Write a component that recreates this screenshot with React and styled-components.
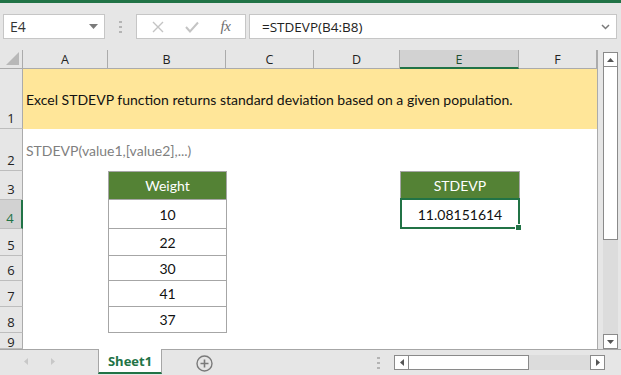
import React from "react";
import styled, { createGlobalStyle } from "styled-components";

const Global = createGlobalStyle`
  html, body { margin: 0; padding: 0; background: #fff; overflow: hidden; }
  #root { width: 621px; height: 375px; }
`;

const UI = `"Open Sans", "Noto Sans", sans-serif`;
const CELLFONT = `"Lato", "Liberation Sans", sans-serif`;

const Frame = styled.div`
  width: 621px;
  height: 375px;
  display: flex;
  flex-direction: column;
  background: #e6e6e6;
  overflow: hidden;
`;

const TopStrip = styled.div`
  height: 3px;
  background: #217346;
  flex: none;
`;

const FormulaBar = styled.div`
  height: 47px;
  flex: none;
  display: flex;
  align-items: flex-start;
  padding: 11px 4px 0 3px;
  box-sizing: border-box;
  background: #e6e6e6;
`;

const Box = styled.div`
  height: 25px;
  box-sizing: border-box;
  background: #fff;
  border: 1px solid #c6c6c6;
  display: flex;
  align-items: center;
`;

const NameBox = styled(Box)`
  width: 102px;
  padding: 0 6px 0 6px;
  justify-content: space-between;
  font-family: ${UI};
  font-size: 14px;
  color: #333;
`;

const Dots = styled.div`
  width: 31px;
  height: 25px;
  display: flex;
  align-items: center;
  justify-content: center;
  flex: none;
`;

const FxBox = styled(Box)`
  width: 110px;
  justify-content: space-around;
  padding: 0 4px 0 4px;
  margin-right: 3px;
`;

const FxText = styled.span`
  font-family: "Liberation Serif", "DejaVu Serif", serif;
  font-style: italic;
  font-size: 15px;
  color: #6d6d6d;
  letter-spacing: -0.5px;
`;

const FormulaInput = styled(Box)`
  flex: 1;
  padding: 0 6px 0 12px;
  justify-content: space-between;
  font-family: ${UI};
  font-size: 13.5px;
  color: #222;
`;

const Main = styled.div`
  display: flex;
  height: 299px;
  flex: none;
`;

const Sheet = styled.div`
  display: grid;
  grid-template-columns: 23px 85px 118px 88px 86px 119px 78px;
  grid-template-rows: 19px 60px 42px 29px 29px 27px 25px 26px 26px 16px;
  width: 597px;
  background: #fff;
  overflow: hidden;
`;

const Corner = styled.div`
  background: #e6e6e6;
  border-right: 1px solid #ababab;
  border-bottom: 1px solid #ababab;
  box-sizing: border-box;
  display: flex;
  align-items: flex-end;
  justify-content: flex-end;
  padding: 0 3px 3px 0;
`;

const ColHeader = styled.div`
  background: ${(p) => (p.$selected ? "#d2d2d2" : "#e6e6e6")};
  border-right: 1px solid #ababab;
  border-bottom: ${(p) => (p.$selected ? "2px solid #217346" : "1px solid #ababab")};
  box-sizing: border-box;
  display: flex;
  align-items: center;
  justify-content: center;
  font-family: ${UI};
  font-size: 12.5px;
  color: ${(p) => (p.$selected ? "#1e4e30" : "#222")};
  padding-top: ${(p) => (p.$selected ? "1px" : "0")};
`;

const RowHeader = styled.div`
  background: ${(p) => (p.$selected ? "#d2d2d2" : "#e6e6e6")};
  border-right: ${(p) => (p.$selected ? "2px solid #217346" : "1px solid #ababab")};
  border-bottom: 1px solid #bdbdbd;
  box-sizing: border-box;
  overflow: hidden;
  display: flex;
  align-items: ${(p) => (p.$clipped ? "flex-start" : "flex-end")};
  justify-content: center;
  padding-bottom: ${(p) => (p.$clipped ? "0" : "2px")};
  padding-top: ${(p) => (p.$clipped ? "2px" : "0")};
  padding-right: ${(p) => (p.$selected ? "1px" : "0")};
  font-family: ${UI};
  font-size: 13px;
  line-height: 15px;
  color: ${(p) => (p.$selected ? "#217346" : "#222")};
`;

const Banner = styled.div`
  grid-column: 2 / span 6;
  background: #ffe699;
  display: flex;
  align-items: center;
  padding: 0 3px;
  font-family: ${CELLFONT};
  font-size: 14px;
  color: #111;
  white-space: nowrap;
`;

const SyntaxCell = styled.div`
  grid-column: 2 / span 6;
  display: flex;
  align-items: center;
  padding: 0 3px;
  font-family: ${CELLFONT};
  font-size: 14px;
  color: #7f7f7f;
  white-space: nowrap;
`;

const Blank = styled.div`
  grid-column: ${(p) => p.$col} / span ${(p) => p.$span || 1};
`;

const TableCell = styled.div`
  position: relative;
  grid-column: ${(p) => p.$col};
  box-sizing: border-box;
  border: 1px solid #a6a6a6;
  border-top: ${(p) => (p.$first ? "1px solid #a6a6a6" : "none")};
  width: calc(100% + 1px);
  background: ${(p) => (p.$head ? "#548235" : "#fff")};
  color: ${(p) => (p.$head ? "#fff" : "#111")};
  display: flex;
  align-items: center;
  justify-content: center;
  font-family: ${CELLFONT};
  font-size: 14px;
`;

const Selection = styled.div`
  position: absolute;
  left: -1px;
  top: -2px;
  right: -1px;
  bottom: -1px;
  border: 2px solid #217346;
  pointer-events: none;
`;

const FillHandle = styled.div`
  position: absolute;
  right: -4px;
  bottom: -4px;
  width: 5px;
  height: 5px;
  background: #217346;
  border: 1px solid #fff;
`;

const VScroll = styled.div`
  width: 24px;
  background: #e6e6e6;
  border-left: 1px solid #ababab;
  box-sizing: border-box;
  display: flex;
  flex-direction: column;
  align-items: center;
  padding: 2px 0 0 2px;
`;

const ScrollTrack = styled.div`
  width: 15px;
  flex: 1;
  display: flex;
  flex-direction: column;
  background: #dcdcdc;
`;

const ArrowBtn = styled.div`
  width: 15px;
  height: 15px;
  box-sizing: border-box;
  border: 1px solid #8a8a8a;
  background: #fff;
  display: flex;
  align-items: center;
  justify-content: center;
  flex: none;
`;

const VThumb = styled.div`
  width: 15px;
  height: 173px;
  box-sizing: border-box;
  border: 1px solid #8a8a8a;
  border-top: none;
  background: #fff;
`;

const Spacer = styled.div`
  flex: 1;
`;

const TabBar = styled.div`
  height: 26px;
  flex: none;
  display: flex;
  align-items: stretch;
  background: #e6e6e6;
  border-top: 1px solid #a6a6a6;
  box-sizing: border-box;
`;

const NavArrows = styled.div`
  width: 98px;
  display: flex;
  align-items: center;
  padding-left: 23px;
  gap: 21px;
  box-sizing: border-box;
`;

const SheetTab = styled.div`
  width: 64px;
  margin-top: -1px;
  background: #fff;
  border-left: 1px solid #a6a6a6;
  border-right: 1px solid #a6a6a6;
  border-bottom: 2px solid #217346;
  box-sizing: border-box;
  display: flex;
  align-items: center;
  justify-content: center;
  font-family: ${UI};
  font-weight: 700;
  font-size: 13px;
  color: #217346;
  margin-bottom: 1px;
`;

const AddBtn = styled.div`
  width: 84px;
  display: flex;
  align-items: center;
  justify-content: center;
  padding-top: 1px;
`;

const TabFiller = styled.div`
  flex: 1;
  display: flex;
  align-items: center;
  justify-content: flex-end;
  padding-right: 16px;
`;

const HScroll = styled.div`
  width: 211px;
  height: 15px;
  display: flex;
  background: #dcdcdc;
  margin-left: 14px;
`;

const HThumb = styled.div`
  width: 120px;
  height: 15px;
  box-sizing: border-box;
  border: 1px solid #8a8a8a;
  border-left: none;
  background: #fff;
`;

const Tri = ({ dir, color = "#666", size = 7 }) => {
  const pts = {
    up: "0,5 7,5 3.5,1",
    down: "0,1 7,1 3.5,5",
    left: "5,0 5,7 1,3.5",
    right: "1,0 1,7 5,3.5",
  }[dir];
  const w = dir === "left" || dir === "right" ? 6 : size;
  const h = dir === "left" || dir === "right" ? size : 6;
  return (
    <svg width={w} height={h} viewBox={`0 0 ${w} ${h}`}>
      <polygon points={pts} fill={color} />
    </svg>
  );
};

const VDots = ({ color = "#a8a8a8" }) => (
  <svg width="3" height="12" viewBox="0 0 3 12">
    <rect x="0" y="0" width="3" height="2" fill={color} />
    <rect x="0" y="5" width="3" height="2" fill={color} />
    <rect x="0" y="10" width="3" height="2" fill={color} />
  </svg>
);

const cols = ["A", "B", "C", "D", "E", "F"];
const weights = [10, 22, 30, 41, 37];

export default function App() {
  return (
    <>
      <Global />
      <Frame>
        <TopStrip />
        <FormulaBar>
          <NameBox>
            <span>E4</span>
            <svg width="9" height="5" viewBox="0 0 9 5">
              <polygon points="0,0 9,0 4.5,5" fill="#7a7a7a" />
            </svg>
          </NameBox>
          <Dots>
            <VDots color="#b4b4b4" />
          </Dots>
          <FxBox>
            <svg width="12" height="12" viewBox="0 0 12 12">
              <path d="M1 1 L11 11 M11 1 L1 11" stroke="#c4c4c4" strokeWidth="1.4" fill="none" />
            </svg>
            <svg width="14" height="12" viewBox="0 0 14 12">
              <path d="M1 6 L5 10.5 L13 1.5" stroke="#c4c4c4" strokeWidth="2" fill="none" />
            </svg>
            <FxText>fx</FxText>
          </FxBox>
          <FormulaInput>
            <span>=STDEVP(B4:B8)</span>
            <svg width="9" height="6" viewBox="0 0 9 6">
              <path d="M1 1 L4.5 4.5 L8 1" stroke="#7a7a7a" strokeWidth="1.5" fill="none" />
            </svg>
          </FormulaInput>
        </FormulaBar>

        <Main>
          <Sheet>
            <Corner>
              <svg width="13" height="13" viewBox="0 0 13 13">
                <polygon points="13,0 13,13 0,13" fill="#b8b8b8" />
              </svg>
            </Corner>
            {cols.map((c) => (
              <ColHeader key={c} $selected={c === "E"}>
                {c}
              </ColHeader>
            ))}

            <RowHeader>1</RowHeader>
            <Banner>Excel STDEVP function returns standard deviation based on a given population.</Banner>

            <RowHeader>2</RowHeader>
            <SyntaxCell>STDEVP(value1,[value2],...)</SyntaxCell>

            <RowHeader>3</RowHeader>
            <Blank $col={2} />
            <TableCell $col={3} $head $first>Weight</TableCell>
            <Blank $col={4} $span={2} />
            <TableCell $col={6} $head $first>STDEVP</TableCell>
            <Blank $col={7} />

            {weights.map((w, i) => (
              <React.Fragment key={i}>
                <RowHeader $selected={i === 0}>{i + 4}</RowHeader>
                <Blank $col={2} />
                <TableCell $col={3}>{w}</TableCell>
                {i === 0 ? (
                  <>
                    <Blank $col={4} $span={2} />
                    <TableCell $col={6}>
                      11.08151614
                      <Selection>
                        <FillHandle />
                      </Selection>
                    </TableCell>
                    <Blank $col={7} />
                  </>
                ) : (
                  <Blank $col={4} $span={4} />
                )}
              </React.Fragment>
            ))}

            <RowHeader $clipped>9</RowHeader>
            <Blank $col={2} $span={6} />
          </Sheet>

          <VScroll>
            <ScrollTrack>
              <ArrowBtn>
                <Tri dir="up" color="#555" />
              </ArrowBtn>
              <VThumb />
              <Spacer />
              <ArrowBtn>
                <Tri dir="down" color="#555" />
              </ArrowBtn>
            </ScrollTrack>
          </VScroll>
        </Main>

        <TabBar>
          <NavArrows>
            <Tri dir="left" color="#c8c8c8" size={9} />
            <Tri dir="right" color="#c8c8c8" size={9} />
          </NavArrows>
          <SheetTab>Sheet1</SheetTab>
          <AddBtn>
            <svg width="17" height="17" viewBox="0 0 17 17">
              <circle cx="8.5" cy="8.5" r="7.5" stroke="#7a7a7a" strokeWidth="1.4" fill="none" />
              <path d="M8.5 4.5 V12.5 M4.5 8.5 H12.5" stroke="#7a7a7a" strokeWidth="1.6" />
            </svg>
          </AddBtn>
          <TabFiller>
            <VDots color="#b4b4b4" />
            <HScroll>
              <ArrowBtn>
                <Tri dir="left" color="#555" />
              </ArrowBtn>
              <HThumb />
              <Spacer />
              <ArrowBtn>
                <Tri dir="right" color="#555" />
              </ArrowBtn>
            </HScroll>
          </TabFiller>
        </TabBar>
      </Frame>
    </>
  );
}
